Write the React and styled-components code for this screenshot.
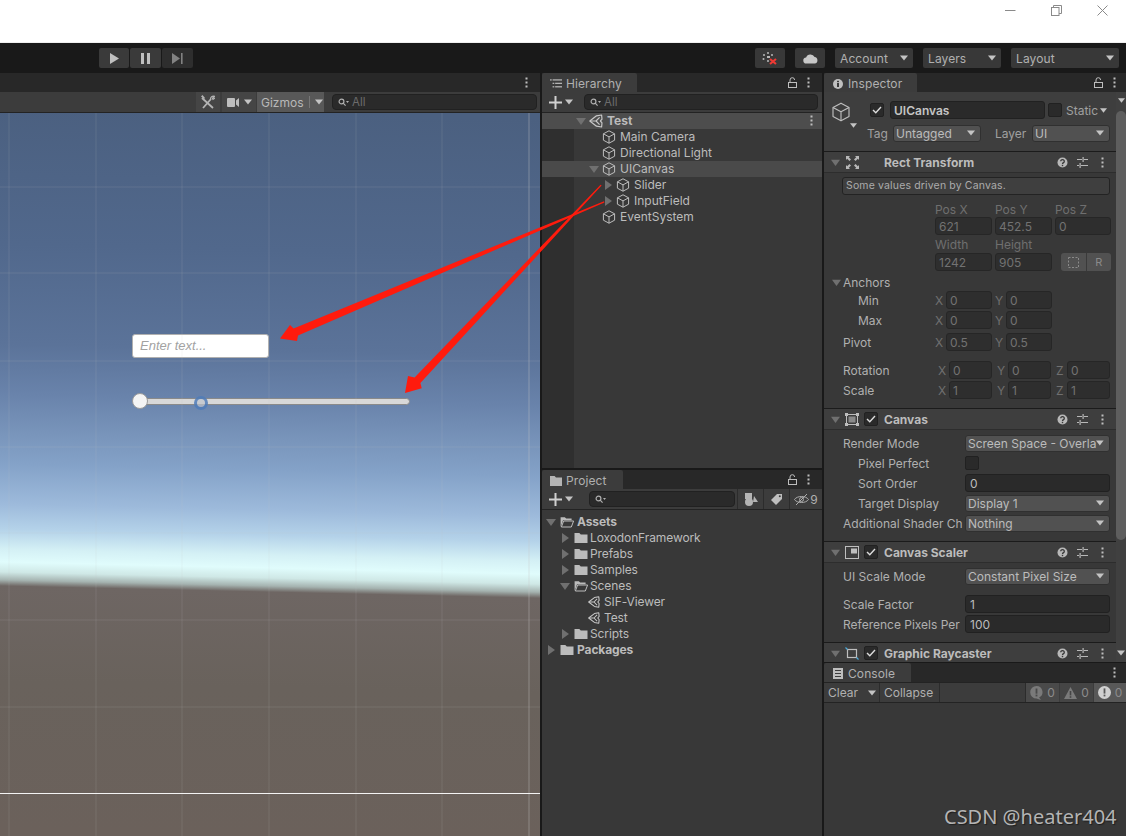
import React from "react";
import styled, { createGlobalStyle } from "styled-components";

const Global = createGlobalStyle`
  html, body { margin: 0; padding: 0; background: #fff; overflow: hidden; }
  * { box-sizing: border-box; }
  body { font-family: Inter, "Liberation Sans", sans-serif; font-size: 12px; color: #bcbcbc; }
`;

const Page = styled.div`
  position: relative; width: 1126px; height: 836px; overflow: hidden;
  display: flex; flex-direction: column; background: #191919;
`;
const TitleBar = styled.div`
  height: 43px; flex: none; background: #fff; border-bottom: 1px solid #efefef;
  display: flex; justify-content: flex-end; gap: 35px; padding: 5px 18px 0 0;
`;
const WinIcon = styled.svg`width: 11px; height: 11px; flex: none;`;
const MainToolbar = styled.div`
  height: 30px; flex: none; background: #191919; display: flex; align-items: center;
  padding: 0 7px 0 99px; justify-content: space-between;
`;
const PlayGroup = styled.div`display: flex; gap: 1px;`;
const PlayButton = styled.div`
  width: ${p => p.$w}px; height: 20px; background: ${p => p.$dim ? "#2e2e2e" : "#3a3a3a"};
  display: flex; align-items: center; justify-content: center;
  border-radius: 2px;
`;
const RightGroup = styled.div`display: flex; gap: 10px;`;
const TopButton = styled.div`
  width: ${p => p.$w}px; height: 20px; background: #383838; border-radius: 2px;
  display: flex; align-items: center; justify-content: ${p => p.$center ? "center" : "space-between"};
  padding: 0 5px; color: #b0b0b0; font-size: 12px; letter-spacing: .1px;
`;
const Main = styled.div`flex: 1; display: flex; gap: 2px; min-height: 0;`;
const Column = styled.div`
  width: ${p => p.$w}px; flex: none; display: flex; flex-direction: column; gap: ${p => p.$gap || 0}px;
`;
const Panel = styled.div`
  height: ${p => p.$h ? p.$h + "px" : "auto"}; flex: ${p => p.$h ? "none" : 1}; min-height: 0;
  background: #383838; display: flex; flex-direction: column; overflow: hidden; position: relative;
`;
const TabBar = styled.div`
  height: 19px; flex: none; background: #282828; display: flex; align-items: stretch;
  justify-content: space-between;
`;
const Tab = styled.div`
  width: ${p => p.$w}px; background: #3c3c3c; border-radius: 2px 2px 0 0; display: flex; align-items: center;
  padding-left: ${p => p.$pl || 8}px; gap: ${p => p.$gap || 4}px; color: #b0b0b0; padding-top: 2px;
  letter-spacing: .1px;
`;
const TabTools = styled.div`display: flex; align-items: center; gap: 10px; padding-right: ${p => p.$pr || 9}px;`;
const Bar = styled.div`
  height: 21px; flex: none; background: #3c3c3c; border-bottom: 1px solid #232323; display: flex; align-items: stretch;
  justify-content: ${p => p.$end ? "flex-end" : "flex-start"};
  padding-right: ${p => p.$pr || 0}px;
`;
const AddButton = styled.div`
  width: ${p => p.$w}px; flex: none; display: flex; align-items: center; padding-left: 7px; gap: 3px;
`;
const Search = styled.div`
  width: ${p => p.$w}px; height: 16px; align-self: center; flex: none; background: #2a2a2a; border: 1px solid #212121;
  border-radius: 4px; display: flex; align-items: center; padding-left: 5px; gap: 3px; color: #6c6c6c; font-size: 11.5px;
`;
const SceneTool = styled.div`
  width: ${p => p.$w}px; margin-right: ${p => p.$mr || 0}px; flex: none; background: ${p => p.$bg || "#454545"};
  display: flex; align-items: center; justify-content: ${p => p.$left ? "flex-start" : "center"};
  padding-left: ${p => p.$left ? 4 : 0}px; gap: 5px; color: #b8b8b8;
`;
const GizmoDivider = styled.span`width: 1px; height: 12px; background: #777; margin-left: 0;`;
const SceneView = styled.div`
  position: relative; flex: 1; overflow: hidden;
  background: linear-gradient(181.3deg,
    #4b6080 6px, #51688c 143px, #5b7399 243px, #6983ab 293px, #7995bb 333px, #84a2c8 363px,
    #9dbadb 403px, #b4d2e9 428px, #d4f0f5 448px, #e0fcfc 461px, #cfe8e6 471px, #a5b3b0 479px,
    #6e6663 485px, #69625c 580px, #6b615b 730px);
`;
const GridLayer = styled.svg`position: absolute; inset: 0; width: 100%; height: 100%; pointer-events: none;`;
const EnterField = styled.div`
  position: absolute; left: 132px; top: 221px; width: 137px; height: 24px;
  background: #fff; border: 1px solid #b0b0b0; border-radius: 3px; padding-left: 7px;
  font: italic 13px/22px "Liberation Sans", sans-serif; color: #a2a2a2;
`;
const SliderTrack = styled.div`
  position: absolute; left: 134px; top: 285px; width: 276px; height: 7px;
  background: #d8d8d8; border: 1px solid #8a8a8a; border-radius: 4px;
`;
const SliderThumb = styled.div`
  position: absolute; left: 132px; top: 280px; width: 16px; height: 16px; border-radius: 50%;
  background: #f4f4f4; border: 1px solid #9a9a9a;
`;
const SliderMark = styled.div`
  position: absolute; left: 194px; top: 283px; width: 14px; height: 14px; border-radius: 50%;
  background: rgba(190,195,205,.8); border: 3px solid #4f7cb9; opacity: .85; filter: blur(.6px);
`;
const TreeBody = styled.div`
  flex: 1; position: relative; padding-top: ${p => p.$pt || 0}px;
  background: ${p => p.$gutter ? "linear-gradient(90deg,#2f2f2f 32px,#383838 32px)" : "#383838"};
`;
const TreeRow = styled.div`
  height: 16px; display: flex; align-items: center; padding-left: ${p => p.$pad}px; padding-bottom: 1px;
  background: ${p => p.$bg || "transparent"}; color: #bcbcbc; font-weight: ${p => p.$bold ? 700 : 400};
  white-space: nowrap; letter-spacing: ${p => p.$tight ? "-.1px" : "0"};
`;
const Slot = styled.span`width: ${p => p.$w || 13}px; flex: none; display: flex; justify-content: flex-start; align-items: center; padding-top: 1px;`;
const RowIcon = styled.span`width: 14px; flex: none; display: flex; justify-content: center; margin-right: ${p => p.$mr || 4}px; padding-top: 1px;`;
const RowEnd = styled.span`margin-left: auto; padding-right: 9px; display: flex;`;
const ProjBtn = styled.div`
  width: ${p => p.$w}px; margin-left: ${p => p.$ml || 0}px; flex: none; border-left: 1px solid #2c2c2c; display: flex; align-items: center; justify-content: center;
  gap: 1px; color: #b0b0b0;
`;
const InspectorWrap = styled.div`flex: 1; min-height: 0; display: flex;`;
const InspectorBody = styled.div`width: 292px; flex: none; overflow: hidden; display: flex; flex-direction: column;`;
const Scrollbar = styled.div`
  width: 10px; flex: none; background: #404040; display: flex; flex-direction: column; align-items: center;
  padding: 5px 0 5px;
`;
const ScrollThumb = styled.div`width: 10px; height: 429px; margin-top: 7px; border-radius: 5px; background: #5e5e5e;`;
const ScrollSpace = styled.div`flex: 1;`;
const ObjectHeader = styled.div`
  height: 59px; flex: none; background: #3e3e3e; display: flex; padding: 9px 6px 0 7px;
`;
const ObjectIcon = styled.div`width: 36px; flex: none; display: flex; flex-direction: column; padding-top: 1px;`;
const CubeCaret = styled.span`display: flex; padding-left: 19px; margin-top: 0;`;
const ObjectMain = styled.div`flex: 1; display: flex; flex-direction: column; gap: 6px;`;
const NameRow = styled.div`display: flex; align-items: center; height: 18px; padding-left: 3px;`;
const TagRow = styled.div`display: flex; align-items: center; height: 17px; color: #a0a0a0;`;
const Check = styled.span`
  width: ${p => p.$s || 14}px; height: ${p => p.$s || 14}px; flex: none; border: 1px solid #212121; background: #2a2a2a; border-radius: 2px;
  margin-left: ${p => p.$ml || 0}px; display: flex; align-items: center; justify-content: center;
`;
const NameField = styled.div`
  width: 155px; height: 18px; margin-left: 6px; flex: none; background: #2a2a2a; border: 1px solid #212121; border-radius: 3px;
  font-weight: 600; font-size: 12px; line-height: 18px; padding-left: 3px; color: #c4c4c4;
`;
const StaticLabel = styled.span`margin-left: 4px; display: flex; align-items: center; gap: 2px; color: #a0a0a0;`;
const Dropdown = styled.div`
  width: ${p => p.$w ? p.$w + "px" : "100%"}; height: 17px; margin-left: ${p => p.$ml || 0}px; flex: none; background: #515151; border: 1px solid #303030;
  border-radius: 3px; display: flex; align-items: center; justify-content: space-between;
  padding: 0 5px 1px 2px; color: #bcbcbc; white-space: nowrap; overflow: hidden;
`;
const TagLabel = styled.span`width: ${p => p.$w}px; margin-left: ${p => p.$ml || 0}px; flex: none;`;
const Section = styled.div`
  border-top: 1px solid #1b1b1b; flex: none; padding-bottom: ${p => p.$pb ?? 9}px;
`;
const SectionHead = styled.div`
  height: ${p => p.$h || 21}px; background: #3e3e3e; border-bottom: 1px solid #2d2d2d; display: flex; align-items: center;
  padding: 0 12px 0 6px; font-weight: 700; color: #bcbcbc; letter-spacing: 0;
`;
const HeadCaret = styled.span`width: 11px; flex: none; display: flex; justify-content: center; margin-right: 4px;`;
const HeadIcon = styled.span`width: 14px; flex: none; display: flex; justify-content: center; margin-right: 5px;`;
const HeadCheck = styled(Check)`margin-right: 6px;`;
const HeadTitle = styled.span`margin-left: ${p => p.$ml || 0}px; flex: 1; white-space: nowrap;`;
const HeadTools = styled.span`display: flex; align-items: center; gap: 9px;`;
const HeadKebab = styled.span`display: flex; margin-left: 4px;`;
const HelpBox = styled.div`
  height: 18px; margin: 4px 6px 0 18px; background: #3f3f3f; border: 1px solid #232323; border-radius: 3px;
  padding-left: 3px; font-size: 10.5px; line-height: 16px; color: #acacac; letter-spacing: .15px;
`;
const PosGrid = styled.div`
  display: grid; grid-template-columns: 57px 57px 56px; column-gap: 3px; margin: ${p => p.$mt || 0}px 0 0 111px;
  height: ${p => p.$h}px; align-items: center; color: #6f6f6f;
`;
const DimField = styled.div`
  height: 18px; width: ${p => p.$w ? p.$w + "px" : "auto"}; background: #2e2e2e; border: 1px solid #262626; border-radius: 3px; padding-left: 3px; line-height: 17px; color: #727272;
`;
const RawBtns = styled.div`
  display: flex; height: 18px; border-radius: 3px; overflow: hidden; background: #515151; margin-left: 6px; width: 50px;
  color: #8a8a8a; font-size: 11px;
`;
const RawBtn = styled.span`flex: 1; display: flex; align-items: center; justify-content: center; border-left: ${p => p.$sep ? "1px solid #3a3a3a" : "none"};`;
const PropRow = styled.div`
  height: ${p => p.$h || 18}px; margin-top: ${p => p.$mt || 0}px; display: flex; align-items: center;
  padding: 0 6px 0 19px; white-space: nowrap; color: #b0b0b0;
`;
const PropCaret = styled.span`width: 13px; margin-left: -13px; display: flex; justify-content: center; flex: none;`;
const PropLabel = styled.span`
  width: ${p => p.$w}px; flex: none; padding-left: ${p => p.$indent || 0}px; overflow: hidden;
`;
const Axis = styled.span`width: ${p => p.$w || 11}px; flex: none; color: #6f6f6f; margin-left: ${p => p.$ml || 0}px;`;
const ValueField = styled.div`
  flex: 1; height: 18px; background: #2a2a2a; border: 1px solid #212121; border-radius: 3px; padding-left: 4px; line-height: 17px; color: #bcbcbc;
`;
const ConsoleBar = styled.div`
  height: 21px; flex: none; background: #3c3c3c; border-bottom: 1px solid #232323; border-top: 1px solid #232323; display: flex; align-items: stretch; color: #b0b0b0;
`;
const ConsoleBtn = styled.div`
  width: ${p => p.$w}px; flex: none; display: flex; align-items: center; justify-content: ${p => p.$center ? "center" : "flex-start"};
  padding-left: ${p => p.$center ? 0 : 4}px; border-right: ${p => p.$sep ? "1px solid #2c2c2c" : "none"}; gap: 4px;
  background: ${p => p.$bg || "transparent"}; margin-right: ${p => p.$mr || 0}px; color: ${p => p.$dim ? "#8c8c8c" : "inherit"};
`;
const ConsoleSpace = styled.div`flex: 1; border-right: 1px solid #2c2c2c;`;
const ConsoleBody = styled.div`flex: 1; background: #383838;`;
const ArrowLayer = styled.svg`position: absolute; left: 0; top: 0; width: 1126px; height: 836px; pointer-events: none;`;
const Watermark = styled.div`
  position: absolute; left: 944px; top: 804px; font: 20px/26px "Noto Sans", "Noto Sans CJK SC", sans-serif; color: #b4b4b4;
  text-shadow: 1px 1px 1px #1e1e1e; white-space: nowrap;
`;

const Tri = ({ dir = "down", c = "#707070", s = 10 }) => (
  <svg width={s} height={s} viewBox="0 0 10 10">
    <path d={dir === "down" ? "M0 2h10L5 9z" : "M2 0v10l7-5z"} fill={c} />
  </svg>
);
const Caret = ({ c = "#c4c4c4", s = 8 }) => (
  <svg width={s} height={s} viewBox="0 0 8 8"><path d="M0 1.5h8L4 6.5z" fill={c} /></svg>
);
const Cube = ({ s = 14, c = "#bebebe", w = 1 }) => (
  <svg width={s} height={s} viewBox="0 0 14 14" fill="none" stroke={c} strokeWidth={w} strokeLinejoin="round">
    <path d="M7 .8 12.6 3.8V10.2L7 13.2 1.4 10.2V3.8Z" />
    <path d="M1.4 3.8 7 6.9 12.6 3.8M7 6.9V13.2" />
  </svg>
);
const UnityLogo = ({ s = 14 }) => (
  <svg width={s} height={s} viewBox="0 0 14 14" fill="none" stroke="#c8c8c8" strokeWidth="1.2" strokeLinejoin="round">
    <path d="M.8 7 7.5 1.8 12.6 1 13 5.2 11.4 7 13 8.8 12.6 13 7.5 12.2Z" />
    <path d="M1 7H7M7 7 10.6 3.4M7 7l3.6 3.6" />
  </svg>
);
const Folder = ({ open }) => open ? (
  <svg width="14" height="12" viewBox="0 0 14 12">
    <path d="M.6 1.2h4.2l1.4 1.4h5.4v1.6H3L.9 10.6H.6z" fill="#bcbcbc" />
    <path d="M3.6 5h10l-2.3 6H1.4z" fill="none" stroke="#bcbcbc" strokeWidth="1" />
  </svg>
) : (
  <svg width="14" height="12" viewBox="0 0 14 12"><path d="M.5 1h4.8l1.5 1.6h6.7V11H.5z" fill="#bcbcbc" /></svg>
);
const Kebab = ({ c = "#bebebe" }) => (
  <svg width="3" height="11" viewBox="0 0 3 11"><g fill={c}><rect x=".5" y=".5" width="2" height="2" /><rect x=".5" y="4.5" width="2" height="2" /><rect x=".5" y="8.5" width="2" height="2" /></g></svg>
);
const Lock = () => (
  <svg width="9" height="11" viewBox="0 0 9 11" fill="none" stroke="#bebebe" strokeWidth="1">
    <rect x=".5" y="5.5" width="8" height="5" /><path d="M2 5.5V3a2.3 2.3 0 0 1 4.6 0" />
  </svg>
);
const Plus = () => (
  <svg width="13" height="13" viewBox="0 0 13 13"><path d="M5.5 0h2v5.5H13v2H7.5V13h-2V7.5H0v-2h5.5z" fill="#d0d0d0" /></svg>
);
const Magnifier = () => (
  <svg width="11" height="9" viewBox="0 0 11 9" fill="none" stroke="#b0b0b0" strokeWidth="1.2">
    <circle cx="3.5" cy="3.5" r="2.4" /><path d="M5.2 5.2 7.6 7.6" /><path d="M8 3h3L9.5 5z" fill="#b0b0b0" stroke="none" />
  </svg>
);
const Help = () => (
  <svg width="11" height="11" viewBox="0 0 11 11">
    <circle cx="5.5" cy="5.5" r="5" fill="#b8b8b8" />
    <path d="M3.7 4.2a1.8 1.6 0 1 1 2.8 1.4c-.7.4-1 .7-1 1.4" fill="none" stroke="#3a3a3a" strokeWidth="1.3" />
    <rect x="4.8" y="7.8" width="1.4" height="1.4" fill="#3a3a3a" />
  </svg>
);
const Presets = () => (
  <svg width="11" height="11" viewBox="0 0 11 11" fill="#b8b8b8">
    <rect x="0" y="2" width="5" height="1" /><rect x="7" y="2" width="4" height="1" /><rect x="5.5" y="0" width="1.2" height="5" />
    <rect x="0" y="8" width="2" height="1" /><rect x="4" y="8" width="7" height="1" /><rect x="2.5" y="6" width="1.2" height="5" />
  </svg>
);
const RectIcon = () => (
  <svg width="13" height="13" viewBox="0 0 13 13" fill="#b8b8b8">
    <path d="M0 0h4L2.8 1.2 5 3.4 3.4 5 1.2 2.8 0 4zM13 0v4l-1.2-1.2L9.6 5 8 3.4l2.2-2.2L9 0zM0 13V9l1.2 1.2L3.4 8 5 9.6l-2.2 2.2L4 13zM13 13H9l1.2-1.2L8 9.6 9.6 8l2.2 2.2L13 9z" />
  </svg>
);
const CanvasIcon = () => (
  <svg width="14" height="13" viewBox="0 0 14 13" fill="none" stroke="#bebebe">
    <rect x="1.5" y="1.5" width="11" height="10" />
    <rect x="3.5" y="3.5" width="7" height="6" fill="#8a8a8a" stroke="none" />
    <g fill="#bebebe" stroke="none"><rect x="0" y="0" width="3" height="3" /><rect x="11" y="0" width="3" height="3" /><rect x="0" y="10" width="3" height="3" /><rect x="11" y="10" width="3" height="3" /></g>
  </svg>
);
const ScalerIcon = () => (
  <svg width="14" height="13" viewBox="0 0 14 13">
    <rect x=".5" y=".5" width="13" height="12" fill="none" stroke="#bebebe" />
    <rect x="6" y="2.5" width="6" height="5" fill="#bebebe" />
  </svg>
);
const RaycastIcon = () => (
  <svg width="14" height="13" viewBox="0 0 14 13" fill="none" stroke="#bebebe" strokeWidth="1.2">
    <rect x="2.5" y="2.5" width="9" height="8" />
    <path d="M.5.5l2 2M11.5 10.5l2 2" stroke="#4aa8d8" />
  </svg>
);
const CheckMark = () => (
  <svg width="10" height="8" viewBox="0 0 10 8" fill="none" stroke="#dcdcdc" strokeWidth="1.4"><path d="M1 4l2.8 2.8L9 1" /></svg>
);

const H_ROWS = [
  { t: "Main Camera", pad: 60 },
  { t: "Directional Light", pad: 60 },
  { t: "UICanvas", pad: 47, open: true, bg: "#4a4a4a" },
  { t: "Slider", pad: 61, closed: true },
  { t: "InputField", pad: 61, closed: true },
  { t: "EventSystem", pad: 60 },
];

const P_ROWS = [
  { t: "Assets", lvl: 0, bold: true, tri: "down", open: true },
  { t: "LoxodonFramework", lvl: 1, tri: "right" },
  { t: "Prefabs", lvl: 1, tri: "right" },
  { t: "Samples", lvl: 1, tri: "right" },
  { t: "Scenes", lvl: 1, tri: "down", open: true },
  { t: "SIF-Viewer", lvl: 2, unity: true },
  { t: "Test", lvl: 2, unity: true },
  { t: "Scripts", lvl: 1, tri: "right" },
  { t: "Packages", lvl: 0, bold: true, tri: "right" },
];

const Vec2 = ({ label, indent, a, b, mt }) => (
  <PropRow $mt={mt}>
    <PropLabel $w={92} $indent={indent}>{label}</PropLabel>
    <Axis>X</Axis><DimField $w={46}>{a}</DimField>
    <Axis $ml={3}>Y</Axis><DimField $w={46}>{b}</DimField>
  </PropRow>
);
const Vec3 = ({ label, v, mt }) => (
  <PropRow $mt={mt}>
    <PropLabel $w={95}>{label}</PropLabel>
    <Axis>X</Axis><DimField $w={43}>{v}</DimField>
    <Axis $ml={5}>Y</Axis><DimField $w={43}>{v}</DimField>
    <Axis $ml={5}>Z</Axis><DimField $w={43}>{v}</DimField>
  </PropRow>
);
const Head = ({ icon, title, check, h, ml }) => (
  <SectionHead $h={h}>
    <HeadCaret><Tri s={9} /></HeadCaret>
    <HeadIcon>{icon}</HeadIcon>
    {check && <HeadCheck><CheckMark /></HeadCheck>}
    <HeadTitle $ml={ml}>{title}</HeadTitle>
    <HeadTools><Help /><Presets /><HeadKebab><Kebab /></HeadKebab></HeadTools>
  </SectionHead>
);
const Value = ({ label, indent, mt, h, children }) => (
  <PropRow $mt={mt} $h={h}>
    <PropLabel $w={122} $indent={indent}>{label}</PropLabel>
    {children}
  </PropRow>
);

export default function App() {
  return (
    <Page>
      <Global />
      <TitleBar>
        <WinIcon viewBox="0 0 11 11"><path d="M0 5.5h10.5" stroke="#8a8a8a" /></WinIcon>
        <WinIcon viewBox="0 0 11 11" fill="none" stroke="#8a8a8a"><rect x=".5" y="2.5" width="7.5" height="8" /><path d="M2.5 2.5v-2h8v8H8" /></WinIcon>
        <WinIcon viewBox="0 0 11 11"><path d="M.5.5l10 10M10.5.5l-10 10" stroke="#8a8a8a" /></WinIcon>
      </TitleBar>
      <MainToolbar>
        <PlayGroup>
          <PlayButton $w={30}><svg width="11" height="11" viewBox="0 0 11 11"><path d="M1 0l9 5.5L1 11z" fill="#c0c0c0" /></svg></PlayButton>
          <PlayButton $w={31}><svg width="9" height="11" viewBox="0 0 9 11" fill="#c0c0c0"><rect x="0" width="3" height="11" /><rect x="6" width="3" height="11" /></svg></PlayButton>
          <PlayButton $w={31} $dim><svg width="11" height="11" viewBox="0 0 11 11" fill="#828282"><path d="M0 0l8 5.5L0 11z" /><rect x="9" width="1.6" height="11" /></svg></PlayButton>
        </PlayGroup>
        <RightGroup>
          <TopButton $w={30} $center>
            <svg width="16" height="14" viewBox="0 0 16 14">
              <g fill="#b8b8b8"><circle cx="6" cy="2" r="1" /><circle cx="2" cy="4" r="1" /><circle cx="1.5" cy="8" r="1" /><circle cx="6" cy="10" r="1" /><circle cx="10" cy="4" r="1" /><rect x="5" y="5" width="3" height="2" /></g>
              <path d="M8 8l6 5M14 8l-6 5" stroke="#ee3a34" strokeWidth="2.2" />
            </svg>
          </TopButton>
          <TopButton $w={30} $center>
            <svg width="15" height="11" viewBox="0 0 15 11"><path d="M3.5 10.5a3 3 0 0 1-.4-6A4.6 4.6 0 0 1 11.6 4a3.3 3.3 0 0 1 .2 6.5z" fill="#c8c8c8" /></svg>
          </TopButton>
          <TopButton $w={78}>Account<Caret /></TopButton>
          <TopButton $w={78}>Layers<Caret /></TopButton>
          <TopButton $w={108}>Layout<Caret /></TopButton>
        </RightGroup>
      </MainToolbar>
      <Main>
        <Column $w={540}>
          <Panel>
            <TabBar>
              <span />
              <TabTools $pr={12}><Kebab /></TabTools>
            </TabBar>
            <Bar $end $pr={3}>
              <SceneTool $w={24} $mr={2}>
                <svg width="14" height="14" viewBox="0 0 14 14" fill="none" stroke="#b4b4b4" strokeWidth="1.8"><path d="M2 13 10 4M1 3l11 10" /><path d="M9.5 4.5a3 3 0 0 1 4-3.2L11.4 3.4l.6 1 2-1.5" strokeWidth="1.2" /><path d="M0 1.5 1.5 0 4 3 3 4z" fill="#b4b4b4" stroke="none" /></svg>
              </SceneTool>
              <SceneTool $w={34} $mr={1}>
                <svg width="12" height="9" viewBox="0 0 12 9" fill="#bebebe"><rect width="8" height="9" rx="1" /><path d="M9 2.5 12 0v9L9 6.5z" /></svg>
                <Caret />
              </SceneTool>
              <SceneTool $w={67} $mr={8} $bg="#585858" $left>
                <span>Gizmos</span><GizmoDivider /><Caret />
              </SceneTool>
              <Search $w={205}><Magnifier /><span>All</span></Search>
            </Bar>
            <SceneView>
              <EnterField>Enter text...</EnterField>
              <SliderTrack />
              <SliderMark />
              <SliderThumb />
              <GridLayer viewBox="0 0 540 723" preserveAspectRatio="none">
                <g stroke="#c8c8c8" strokeOpacity=".14" strokeWidth="1">
                  {[9, 96, 182, 269, 356, 442].map(x => <line key={x} x1={x} x2={x} y1="0" y2="723" />)}
                  <line x1="529" x2="529" y1="0" y2="723" strokeWidth="2" strokeOpacity=".2" />
                  {[74, 160, 248, 334, 420, 507, 594].map(y => <line key={y} x1="0" x2="540" y1={y} y2={y} />)}
                </g>
                <line x1="0" x2="540" y1="680.5" y2="680.5" stroke="#f4f4f4" strokeWidth="1" />
              </GridLayer>
            </SceneView>
          </Panel>
        </Column>
        <Column $w={280} $gap={2}>
          <Panel $h={395}>
            <TabBar>
              <Tab $w={95} $pl={8} $gap={4}>
                <svg width="12" height="10" viewBox="0 0 14 11" fill="#b4b4b4"><rect x="0" y="0" width="2" height="1.5" /><rect x="3" y="0" width="11" height="1.5" /><rect x="3" y="4" width="2" height="1.5" /><rect x="6" y="4" width="8" height="1.5" /><rect x="3" y="8" width="2" height="1.5" /><rect x="6" y="8" width="8" height="1.5" /></svg>
                Hierarchy
              </Tab>
              <TabTools $pr={12}><Lock /><Kebab /></TabTools>
            </TabBar>
            <Bar>
              <AddButton $w={42}><Plus /><Caret /></AddButton>
              <Search $w={234}><Magnifier /><span>All</span></Search>
            </Bar>
            <TreeBody $gutter>
              <TreeRow $pad={34} $bg="#4d4d4d" $bold>
                <Slot><Tri /></Slot>
                <RowIcon><UnityLogo /></RowIcon>Test
                <RowEnd><Kebab /></RowEnd>
              </TreeRow>
              {H_ROWS.map(r => (
                <TreeRow key={r.t} $pad={r.pad} $bg={r.bg}>
                  {(r.open || r.closed) && <Slot><Tri dir={r.open ? "down" : "right"} /></Slot>}
                  <RowIcon><Cube /></RowIcon>{r.t}
                </TreeRow>
              ))}
            </TreeBody>
          </Panel>
          <Panel>
            <TabBar>
              <Tab $w={81} $pl={8} $gap={4}>
                <svg width="12" height="11" viewBox="0 0 12 11"><path d="M0 1h4.6L6 2.6h6V11H0z" fill="#b4b4b4" /></svg>
                Project
              </Tab>
              <TabTools $pr={12}><Lock /><Kebab /></TabTools>
            </TabBar>
            <Bar>
              <AddButton $w={47}><Plus /><Caret /></AddButton>
              <Search $w={146}><Magnifier /></Search>
              <ProjBtn $w={26} $ml={2}>
                <svg width="14" height="13" viewBox="0 0 14 13" fill="#b4b4b4"><rect x="1" y="0" width="7" height="6" /><circle cx="5" cy="9" r="4" /><path d="M10 3l4 6h-5z" /></svg>
              </ProjBtn>
              <ProjBtn $w={26}>
                <svg width="13" height="13" viewBox="0 0 13 13"><path d="M7 1h5v5L6 12 1 7z" fill="#bebebe" /><circle cx="9.8" cy="3.2" r="1" fill="#3c3c3c" /></svg>
              </ProjBtn>
              <ProjBtn $w={33}>
                <svg width="15" height="11" viewBox="0 0 15 11" fill="none" stroke="#acacac"><path d="M.5 5.5C3 1.5 12 1.5 14.5 5.5 12 9.5 3 9.5.5 5.5z" /><circle cx="7.5" cy="5.5" r="2" /><path d="M2 11 13 0" /></svg>
                9
              </ProjBtn>
            </Bar>
            <TreeBody $pt={4}>
              {P_ROWS.map(r => (
                <TreeRow key={r.t} $pad={r.unity ? 31 : 4 + r.lvl * 14} $bold={r.bold} $tight>
                  <Slot $w={14}>{r.tri && <Tri dir={r.tri} />}</Slot>
                  <RowIcon $mr={r.unity ? 3 : r.lvl ? 2 : 3}>{r.unity ? <UnityLogo s={12} /> : <Folder open={r.open} />}</RowIcon>
                  {r.t}
                </TreeRow>
              ))}
            </TreeBody>
          </Panel>
        </Column>
        <Column $w={302} $gap={1}>
          <Panel $h={589}>
            <TabBar>
              <Tab $w={93} $pl={9} $gap={5}>
                <svg width="10" height="10" viewBox="0 0 10 10"><circle cx="5" cy="5" r="5" fill="#c0c0c0" /><rect x="4" y="4" width="2" height="4" fill="#3c3c3c" /><rect x="4" y="1.8" width="2" height="1.4" fill="#3c3c3c" /></svg>
                Inspector
              </Tab>
              <TabTools $pr={10}><Lock /><Kebab /></TabTools>
            </TabBar>
            <InspectorWrap>
              <InspectorBody>
                <ObjectHeader>
                  <ObjectIcon>
                    <Cube s={20} w={.8} />
                    <CubeCaret><Caret s={7} /></CubeCaret>
                  </ObjectIcon>
                  <ObjectMain>
                    <NameRow>
                      <Check><CheckMark /></Check>
                      <NameField>UICanvas</NameField>
                      <Check $ml={3} />
                      <StaticLabel>Static<Caret s={7} /></StaticLabel>
                    </NameRow>
                    <TagRow>
                      <TagLabel $w={26}>Tag</TagLabel>
                      <Dropdown $w={88}>Untagged<Caret /></Dropdown>
                      <TagLabel $w={37} $ml={14}>Layer</TagLabel>
                      <Dropdown $w={78}>UI<Caret /></Dropdown>
                    </TagRow>
                  </ObjectMain>
                </ObjectHeader>
                <Section $pb={9}>
                  <Head icon={<RectIcon />} title="Rect Transform" ml={20} />
                  <HelpBox>Some values driven by Canvas.</HelpBox>
                  <PosGrid $h={16} $mt={6}><span>Pos X</span><span>Pos Y</span><span>Pos Z</span></PosGrid>
                  <PosGrid $h={18}><DimField>621</DimField><DimField>452.5</DimField><DimField>0</DimField></PosGrid>
                  <PosGrid $h={16} $mt={1}><span>Width</span><span>Height</span></PosGrid>
                  <PosGrid $h={18} $mt={1}>
                    <DimField>1242</DimField><DimField>905</DimField>
                    <RawBtns>
                      <RawBtn><svg width="11" height="11" viewBox="0 0 11 11" fill="none" stroke="#8a8a8a" strokeDasharray="2 1.5"><rect x=".5" y=".5" width="10" height="10" /></svg></RawBtn>
                      <RawBtn $sep>R</RawBtn>
                    </RawBtns>
                  </PosGrid>
                  <PropRow $h={17} $mt={3}>
                    <PropCaret><Tri s={9} /></PropCaret>Anchors
                  </PropRow>
                  <Vec2 label="Min" indent={15} a="0" b="0" />
                  <Vec2 label="Max" indent={15} a="0" b="0" mt={2} />
                  <Vec2 label="Pivot" a="0.5" b="0.5" mt={4} />
                  <Vec3 label="Rotation" v="0" mt={10} />
                  <Vec3 label="Scale" v="1" mt={2} />
                </Section>
                <Section $pb={9}>
                  <Head icon={<CanvasIcon />} title="Canvas" check />
                  <Value label="Render Mode" mt={5} h={17}><Dropdown $w={145}><span>Screen Space - Overla</span><Caret /></Dropdown></Value>
                  <Value label="Pixel Perfect" indent={15} mt={2}><Check /></Value>
                  <Value label="Sort Order" indent={15} mt={2}><ValueField>0</ValueField></Value>
                  <Value label="Target Display" indent={15} mt={3} h={17}><Dropdown $w={145}>Display 1<Caret /></Dropdown></Value>
                  <Value label="Additional Shader Ch" mt={3} h={17}><Dropdown $w={145}>Nothing<Caret /></Dropdown></Value>
                </Section>
                <Section $pb={9}>
                  <Head icon={<ScalerIcon />} title="Canvas Scaler" check />
                  <Value label="UI Scale Mode" mt={5} h={17}><Dropdown $w={145}>Constant Pixel Size<Caret /></Dropdown></Value>
                  <Value label="Scale Factor" mt={10}><ValueField>1</ValueField></Value>
                  <Value label="Reference Pixels Per" mt={2}><ValueField>100</ValueField></Value>
                </Section>
                <Section $pb={0}>
                  <Head icon={<RaycastIcon />} title="Graphic Raycaster" check h={21} />
                </Section>
              </InspectorBody>
              <Scrollbar>
                <Caret c="#c4c4c4" s={7} />
                <ScrollThumb />
                <ScrollSpace />
                <Caret s={8} />
              </Scrollbar>
            </InspectorWrap>
          </Panel>
          <Panel>
            <TabBar>
              <Tab $w={87} $pl={9} $gap={5}>
                <svg width="10" height="11" viewBox="0 0 10 11"><rect width="10" height="11" fill="#bebebe" /><path d="M2 2.5h6M2 5.5h6M2 8.5h6" stroke="#3c3c3c" /></svg>
                Console
              </Tab>
              <TabTools $pr={10}><Kebab /></TabTools>
            </TabBar>
            <ConsoleBar>
              <ConsoleBtn $w={40}>Clear</ConsoleBtn>
              <ConsoleBtn $w={16} $sep $center><Caret /></ConsoleBtn>
              <ConsoleBtn $w={60} $sep>Collapse</ConsoleBtn>
              <ConsoleSpace />
              <ConsoleBtn $w={33} $bg="#4a4a4a" $center $mr={1} $dim>
                <svg width="13" height="14" viewBox="0 0 13 14"><path d="M6.5 0a6 6 0 0 1 2.6 11.4L11 14 6.5 12.6A6.3 6.3 0 0 1 6.5 0z" fill="#7a7a7a" /><rect x="5.6" y="2.5" width="1.8" height="5.2" fill="#4a4a4a" /><rect x="5.6" y="8.6" width="1.8" height="1.8" fill="#4a4a4a" /></svg>
                0
              </ConsoleBtn>
              <ConsoleBtn $w={33} $bg="#454545" $center $mr={1} $dim>
                <svg width="13" height="12" viewBox="0 0 13 12"><path d="M6.5 0 13 12H0z" fill="#7a7a7a" /><rect x="5.7" y="4" width="1.6" height="4.4" fill="#454545" /><rect x="5.7" y="9.2" width="1.6" height="1.6" fill="#454545" /></svg>
                0
              </ConsoleBtn>
              <ConsoleBtn $w={32} $bg="#585858" $center $dim>
                <svg width="13" height="13" viewBox="0 0 13 13"><circle cx="6.5" cy="6.5" r="6.5" fill="#d0d0d0" /><rect x="5.6" y="2.4" width="1.8" height="5.2" fill="#585858" /><rect x="5.6" y="8.6" width="1.8" height="1.8" fill="#585858" /></svg>
                0
              </ConsoleBtn>
            </ConsoleBar>
            <ConsoleBody />
          </Panel>
        </Column>
      </Main>
      <ArrowLayer viewBox="0 0 1126 836">
        <polygon fill="#ff1b0d" points="280,338.5 290,325 293.6,328.6 604,201.2 604.4,202.6 298,335.5 297,341" />
        <polygon fill="#ff1b0d" points="405,393 408,376 414.6,377.6 600.6,184.7 601.6,185.5 420.4,383 421.7,388.3" />
      </ArrowLayer>
      <Watermark>CSDN @heater404</Watermark>
    </Page>
  );
}
